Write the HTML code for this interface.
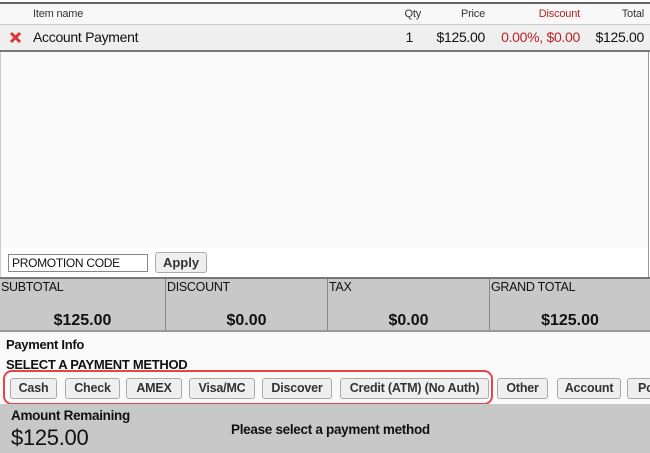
<!DOCTYPE html>
<html><head><meta charset="utf-8"><style>
*{margin:0;padding:0;box-sizing:border-box}
body{width:650px;height:453px;overflow:hidden;background:#fff;font-family:"Liberation Sans",Arial,sans-serif;color:#111;position:relative}
.abs{position:absolute}
.r{position:absolute;text-align:right}
.btn{position:absolute;top:378px;height:21px;border:1px solid #aaa;border-radius:3px;background:#efefef;font-size:12.5px;font-weight:bold;color:#333;text-align:center;line-height:19px;white-space:nowrap;overflow:hidden;letter-spacing:-0.2px}
.tl{font-size:12.5px;color:#111;position:absolute;top:1px;left:1px;letter-spacing:-0.3px}
.tv{font-size:16px;font-weight:bold;position:absolute;top:33px;width:100%;text-align:center}
.it{font-size:14px;top:29px;letter-spacing:-0.3px}
.hd{font-size:11px;color:#333;top:8px;letter-spacing:-0.2px}
</style></head><body>
<div class="abs" style="left:0;top:2px;width:650px;height:2px;background:#666"></div>
<div class="abs" style="left:0;top:4px;width:650px;height:20px;background:#f8f8f8"></div>
<div class="abs" style="left:0;top:24px;width:650px;height:1px;background:#ccc"></div>
<div class="abs" style="left:0;top:25px;width:650px;height:25px;background:#efefef"></div>
<div class="abs" style="left:0;top:50px;width:650px;height:2px;background:#777"></div>
<div class="abs" style="left:1px;top:52px;width:647px;height:196px;background:#fafafa"></div>
<div class="abs" style="left:1px;top:248px;width:647px;height:30px;background:#fff"></div>
<div class="abs" style="left:0;top:52px;width:1px;height:226px;background:#ccc"></div>
<div class="abs" style="left:648px;top:52px;width:1px;height:226px;background:#999"></div>
<div class="abs hd" style="left:33px">Item name</div>
<div class="r hd" style="right:229px">Qty</div>
<div class="r hd" style="right:165px">Price</div>
<div class="r hd" style="right:70px;color:#b22">Discount</div>
<div class="r hd" style="right:6px">Total</div>
<svg class="abs" style="left:9px;top:31px" width="13" height="13"><path d="M2 2L11 11M11 2L2 11" stroke="#d33" stroke-width="3"/></svg>
<div class="abs it" style="left:33px">Account Payment</div>
<div class="r it" style="right:237px">1</div>
<div class="r it" style="right:165px">$125.00</div>
<div class="r it" style="right:70px;color:#b22">0.00%, $0.00</div>
<div class="r it" style="right:6px">$125.00</div>
<div class="abs" style="left:8px;top:254px;width:140px;height:18px;border:1px solid #888;font-size:12px;line-height:16px;padding-left:3px;background:#fff;letter-spacing:-0.3px">PROMOTION CODE</div>
<div class="abs" style="left:155px;top:252px;width:52px;height:21px;border:1px solid #aaa;border-radius:3px;background:#efefef;font-size:13px;font-weight:bold;color:#333;text-align:center;line-height:19px">Apply</div>
<div class="abs" style="left:0;top:277px;width:650px;height:2px;background:#777"></div>
<div class="abs" style="left:0;top:279px;width:650px;height:51px;background:#c8c8c8"></div>
<div class="abs" style="left:0;top:279px;width:165px;height:51px"><span class="tl">SUBTOTAL</span><span class="tv">$125.00</span></div>
<div class="abs" style="left:165px;top:279px;width:162px;height:51px;border-left:1px solid #888"><span class="tl">DISCOUNT</span><span class="tv">$0.00</span></div>
<div class="abs" style="left:327px;top:279px;width:162px;height:51px;border-left:1px solid #888"><span class="tl">TAX</span><span class="tv">$0.00</span></div>
<div class="abs" style="left:489px;top:279px;width:161px;height:51px;border-left:1px solid #888"><span class="tl">GRAND TOTAL</span><span class="tv">$125.00</span></div>
<div class="abs" style="left:0;top:330px;width:650px;height:2px;background:#999"></div>
<div class="abs" style="left:0;top:332px;width:650px;height:71px;background:#f9f9f9"></div>
<div class="abs" style="font-size:13px;font-weight:bold;top:337px;left:6px;letter-spacing:-0.3px">Payment Info</div>
<div class="abs" style="font-size:13px;font-weight:bold;top:357px;left:6px;letter-spacing:-0.3px">SELECT A PAYMENT METHOD</div>
<div class="btn" style="left:10px;width:47px">Cash</div>
<div class="btn" style="left:65px;width:55px">Check</div>
<div class="btn" style="left:126px;width:56px">AMEX</div>
<div class="btn" style="left:189px;width:66px">Visa/MC</div>
<div class="btn" style="left:262px;width:70px">Discover</div>
<div class="btn" style="left:340px;width:149px">Credit (ATM) (No Auth)</div>
<div class="btn" style="left:497px;width:51px">Other</div>
<div class="btn" style="left:557px;width:64px">Account</div>
<div class="btn" style="left:627px;width:40px;text-align:left;padding-left:10px">Po</div>
<div class="abs" style="left:3px;top:370px;width:490px;height:35px;border:2px solid #e04848;border-radius:9px"></div>
<div class="abs" style="left:0;top:404px;width:650px;height:49px;background:#c8c8c8"></div>
<div class="abs" style="font-size:13.5px;font-weight:bold;top:408px;left:11px;letter-spacing:-0.3px">Amount Remaining</div>
<div class="abs" style="font-size:22px;top:425px;left:11px;letter-spacing:-0.3px">$125.00</div>
<div class="abs" style="font-size:13.5px;font-weight:bold;top:422px;left:231px;letter-spacing:-0.3px">Please select a payment method</div>
</body></html>
